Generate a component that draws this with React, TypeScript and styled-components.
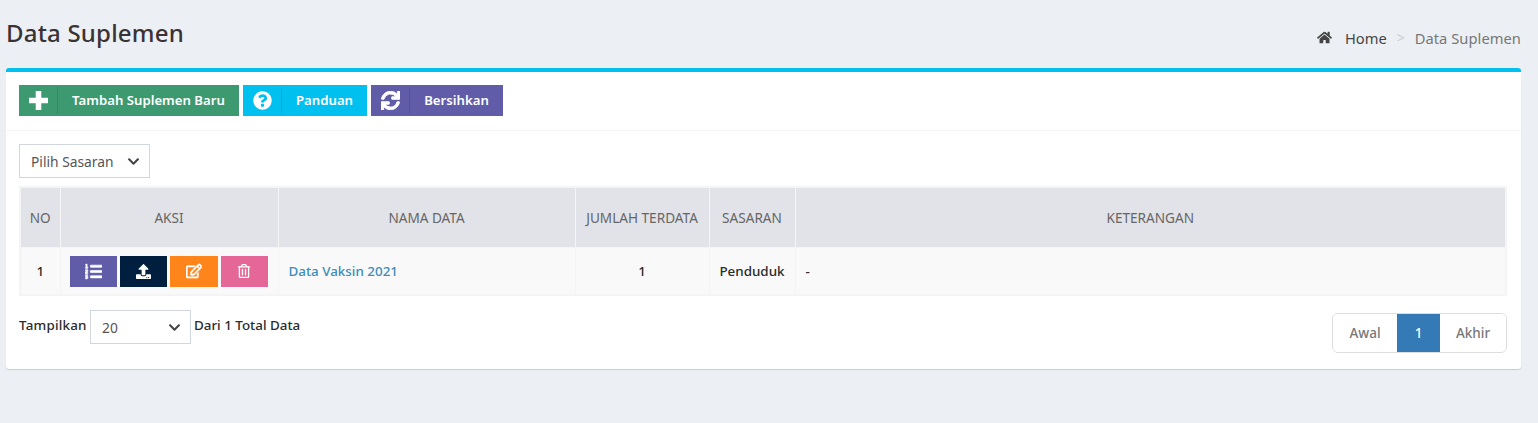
import React from 'react';
import styled, { createGlobalStyle } from 'styled-components';
import { FaHome, FaQuestionCircle, FaSync, FaListOl, FaUpload, FaRegEdit, FaRegTrashAlt, FaChevronDown } from 'react-icons/fa';

const Global = createGlobalStyle`
  html, body {
    margin: 0;
    background: #ecf0f5;
    font-family: "Noto Sans", "Open Sans", sans-serif;
    font-size: 13px;
    color: #333;
  }
  * { box-sizing: border-box; }
`;

const Page = styled.div`
  width: 1538px;
  height: 423px;
  padding: 0 17px 0 6px;
`;

const Header = styled.div`
  height: 68px;
  display: flex;
  justify-content: space-between;
`;

const Title = styled.h1`
  margin: 17px 0 0;
  font-size: 24px;
  line-height: 32px;
  font-weight: 500;
  color: #3a3235;
  letter-spacing: 0.2px;
`;

const Crumbs = styled.div`
  margin-top: 27px;
  height: 21px;
  display: flex;
  align-items: center;
  font-size: 14.7px;
  color: #444;
  svg { width: 15px; height: 15px; margin-right: 13px; }
`;

const CrumbSep = styled.span`
  color: #ccc;
  margin: 0 10px 0 10px;
  font-size: 14px;
`;

const CrumbActive = styled.span`
  color: #777;
  letter-spacing: 0.05px;
`;

const Card = styled.div`
  background: #fff;
  border-top: 4px solid #00c0ef;
  border-radius: 3px;
  box-shadow: 0 1px 1px rgba(0, 0, 0, 0.15);
  height: 301px;
`;

const Toolbar = styled.div`
  height: 59px;
  padding: 13px 13px 0;
  display: flex;
  gap: 4px;
  border-bottom: 1px solid #f4f4f4;
`;

const ActionButton = styled.div<{ $bg: string; $width: number }>`
  width: ${p => p.$width}px;
  height: 31px;
  display: flex;
  align-items: stretch;
  background: ${p => p.$bg};
  color: #fff;
  font-size: 13.2px;
  font-weight: 600;
`;

const ButtonIcon = styled.span<{ $line: string; $bold?: boolean }>`
  width: 39px;
  margin: 2px 0;
  flex: none;
  display: flex;
  align-items: center;
  justify-content: center;
  border-right: 1px solid ${p => p.$line};
  svg {
    width: 19px;
    height: 19px;
    stroke: currentColor;
    stroke-width: ${p => (p.$bold ? 24 : 0)};
  }
`;

const ButtonText = styled.span`
  flex: 1;
  padding-bottom: 1px;
  display: flex;
  align-items: center;
  justify-content: center;
  white-space: nowrap;
`;

const Body = styled.div`
  padding: 13px 14px 0 13px;
`;

const SelectBox = styled.div<{ $width: number }>`
  width: ${p => p.$width}px;
  height: 34px;
  padding: 1px 9px 0 11px;
  display: flex;
  align-items: center;
  justify-content: space-between;
  border: 1px solid #d2d6de;
  background: #fff;
  font-size: 13.8px;
  font-weight: 400;
  color: #555;
  svg { width: 13px; height: 13px; color: #444; }
`;

const Table = styled.table`
  width: 1488px;
  margin-top: 8px;
  border-collapse: collapse;
  table-layout: fixed;
  border: 2px solid #f4f4f4;
`;

const HeadCell = styled.th`
  height: 60px;
  padding: 0;
  background: #e2e3e8;
  border: 1px solid #f4f4f4;
  font-size: 13.6px;
  font-weight: 400;
  color: #666;
  text-align: center;
`;

const Row = styled.tr`
  background: #f9f9f9;
`;

const Cell = styled.td<{ $align?: string }>`
  height: 48px;
  padding: 1px 9px 0 ${p => (p.$align === 'left' ? 10 : 9)}px;
  border: 1px solid #f4f4f4;
  text-align: ${p => p.$align || 'center'};
  font-size: 13.4px;
  font-weight: 500;
  color: #2b2b2b;
`;

const NameLink = styled.a`
  color: #3c8dbc;
  font-weight: 500;
  text-decoration: none;
`;

const RowActions = styled.div`
  display: flex;
  gap: 3px;
`;

const SmallButton = styled.span<{ $bg: string; $width: number; $icon: number; $bold?: boolean }>`
  width: ${p => p.$width}px;
  height: 31px;
  display: flex;
  align-items: center;
  justify-content: center;
  background: ${p => p.$bg};
  color: #fff;
  svg {
    width: ${p => p.$icon}px;
    height: ${p => p.$icon}px;
    stroke: currentColor;
    stroke-width: ${p => (p.$bold ? 20 : 0)};
  }
`;

const Footer = styled.div`
  margin-top: 14px;
  display: flex;
  justify-content: space-between;
  align-items: flex-start;
`;

const ShowRow = styled.div`
  display: flex;
  gap: 3px;
  font-size: 13.4px;
  font-weight: 500;
  color: #2b2b2b;
  line-height: 30px;
`;

const ShowLabel = styled.span`
  width: 68px;
  white-space: nowrap;
  letter-spacing: 0.2px;
`;

const Pager = styled.div`
  margin-top: 3px;
  height: 40px;
  display: flex;
  border: 1px solid #ddd;
  border-radius: 6px;
  overflow: hidden;
`;

const PageItem = styled.span<{ $active?: boolean; $width: number }>`
  width: ${p => p.$width}px;
  display: flex;
  align-items: center;
  justify-content: center;
  font-size: 13.5px;
  font-weight: 500;
  margin: ${p => (p.$active ? '-1px 0' : '0')};
  background: ${p => (p.$active ? '#337ab7' : '#fff')};
  color: ${p => (p.$active ? '#fff' : '#777')};
`;

const PlusIcon = () => (
  <svg viewBox="0 0 17 17" fill="currentColor">
    <path d="M6 0h5v6h6v5h-6v6H6v-6H0V6h6z" />
  </svg>
);

const App = () => (
  <Page>
    <Global />
    <Header>
      <Title>Data Suplemen</Title>
      <Crumbs>
        <FaHome />
        <span>Home</span>
        <CrumbSep>&gt;</CrumbSep>
        <CrumbActive>Data Suplemen</CrumbActive>
      </Crumbs>
    </Header>
    <Card>
      <Toolbar>
        <ActionButton $bg="#3d9970" $width={220}>
          <ButtonIcon $line="#35865f"><PlusIcon /></ButtonIcon>
          <ButtonText>Tambah Suplemen Baru</ButtonText>
        </ActionButton>
        <ActionButton $bg="#00c0ef" $width={124}>
          <ButtonIcon $line="#00acd6"><FaQuestionCircle /></ButtonIcon>
          <ButtonText>Panduan</ButtonText>
        </ActionButton>
        <ActionButton $bg="#605ca8" $width={132}>
          <ButtonIcon $line="#555299" $bold><FaSync /></ButtonIcon>
          <ButtonText>Bersihkan</ButtonText>
        </ActionButton>
      </Toolbar>
      <Body>
        <SelectBox $width={131}>
          <span>Pilih Sasaran</span>
          <FaChevronDown />
        </SelectBox>
        <Table>
          <colgroup>
            <col width="40" />
            <col width="218" />
            <col width="297" />
            <col width="134" />
            <col width="86" />
            <col />
          </colgroup>
          <thead>
            <tr>
              <HeadCell>NO</HeadCell>
              <HeadCell>AKSI</HeadCell>
              <HeadCell>NAMA DATA</HeadCell>
              <HeadCell>JUMLAH TERDATA</HeadCell>
              <HeadCell>SASARAN</HeadCell>
              <HeadCell>KETERANGAN</HeadCell>
            </tr>
          </thead>
          <tbody>
            <Row>
              <Cell>1</Cell>
              <Cell>
                <RowActions>
                  <SmallButton $bg="#605ca8" $width={47} $icon={17} $bold><FaListOl /></SmallButton>
                  <SmallButton $bg="#001f3f" $width={47} $icon={15}><FaUpload /></SmallButton>
                  <SmallButton $bg="#ff851b" $width={48} $icon={16} $bold><FaRegEdit /></SmallButton>
                  <SmallButton $bg="#e56797" $width={47} $icon={14}><FaRegTrashAlt /></SmallButton>
                </RowActions>
              </Cell>
              <Cell $align="left"><NameLink>Data Vaksin 2021</NameLink></Cell>
              <Cell>1</Cell>
              <Cell>Penduduk</Cell>
              <Cell $align="left">-</Cell>
            </Row>
          </tbody>
        </Table>
        <Footer>
          <ShowRow>
            <ShowLabel>Tampilkan</ShowLabel>
            <SelectBox $width={101}>
              <span>20</span>
              <FaChevronDown />
            </SelectBox>
            <span>Dari 1 Total Data</span>
          </ShowRow>
          <Pager>
            <PageItem $width={64}>Awal</PageItem>
            <PageItem $active $width={43}>1</PageItem>
            <PageItem $width={66}>Akhir</PageItem>
          </Pager>
        </Footer>
      </Body>
    </Card>
  </Page>
);

export default App;
